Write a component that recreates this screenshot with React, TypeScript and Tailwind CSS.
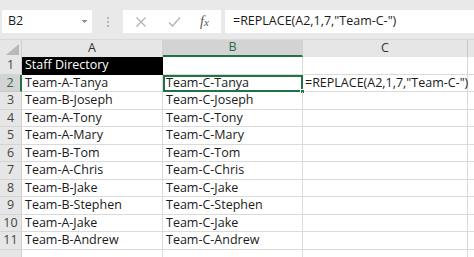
import React from 'react';

const ROWS: [string, string, string][] = [
  ['Staff Directory', '', ''],
  ['Team-A-Tanya', 'Team-C-Tanya', '=REPLACE(A2,1,7,"Team-C-")'],
  ['Team-B-Joseph', 'Team-C-Joseph', ''],
  ['Team-A-Tony', 'Team-C-Tony', ''],
  ['Team-A-Mary', 'Team-C-Mary', ''],
  ['Team-B-Tom', 'Team-C-Tom', ''],
  ['Team-A-Chris', 'Team-C-Chris', ''],
  ['Team-B-Jake', 'Team-C-Jake', ''],
  ['Team-B-Stephen', 'Team-C-Stephen', ''],
  ['Team-A-Jake', 'Team-C-Jake', ''],
  ['Team-B-Andrew', 'Team-C-Andrew', ''],
  ['', '', ''],
];

const font = { fontFamily: '"Open Sans", "Liberation Sans", sans-serif' };

const App: React.FC = () => {
  return (
    <div className="w-[474px] h-[257px] overflow-hidden bg-white text-[#1a1a1a]" style={font}>
      {/* Formula bar */}
      <div className="h-[40px] bg-[#e9e9e9] flex items-start pt-[10px] border-b border-[#d9d9d9]">
        <div className="ml-[2px] w-[90px] h-[23px] bg-white flex items-center justify-between pl-[6px] pr-[4px]">
          <span className="text-[12.5px]">B2</span>
          <svg width="7" height="5" viewBox="0 0 7 5">
            <path d="M0.5 1 L3.5 4 L6.5 1 Z" fill="#8a8a8a" />
          </svg>
        </div>
        <div className="w-[31px] h-[23px] flex flex-col items-center justify-center gap-[2px]">
          <span className="w-[2px] h-[2px] bg-[#b5b5b5]" />
          <span className="w-[2px] h-[2px] bg-[#b5b5b5]" />
          <span className="w-[2px] h-[2px] bg-[#b5b5b5]" />
        </div>
        <div className="w-[98px] h-[23px] bg-white flex items-center pl-[10px]">
          <svg width="12" height="12" viewBox="0 0 12 12" className="ml-[2px]">
            <path d="M1.5 1.5 L10.5 10.5 M10.5 1.5 L1.5 10.5" stroke="#b0b0b0" strokeWidth="1.2" fill="none" />
          </svg>
          <svg width="13" height="12" viewBox="0 0 13 12" className="ml-[21px]">
            <path d="M1 6.5 L4.5 10 L12 1.5" stroke="#b0b0b0" strokeWidth="1.3" fill="none" />
          </svg>
          <span
            className="ml-[19px] text-[14px] italic text-[#555]"
            style={{ fontFamily: '"Liberation Serif", serif' }}
          >
            f<span className="text-[11px]">x</span>
          </span>
        </div>
        <div className="ml-[4px] flex-1 h-[23px] bg-white flex items-center pl-[8px] text-[12.5px] whitespace-nowrap">
          =REPLACE(A2,1,7,&quot;Team-C-&quot;)
        </div>
      </div>

      {/* Column headers */}
      <div className="flex h-[17px] bg-[#e6e6e6] text-[12.5px] text-[#333]">
        <div className="w-[22px] shrink-0 border-r border-[#d0d0d0] flex items-end justify-end pr-[2px] pb-[2px]">
          <svg width="13" height="11" viewBox="0 0 13 11">
            <path d="M13 0 L13 11 L0 11 Z" fill="#b8b8b8" />
          </svg>
        </div>
        <div className="w-[141px] shrink-0 border-r border-[#d0d0d0] flex items-center justify-center">A</div>
        <div className="w-[140px] shrink-0 border-r border-[#d0d0d0] bg-[#d3d3d3] border-b-2 border-b-[#217346] text-[#2d6b47] flex items-center justify-center">B</div>
        <div className="w-[165px] shrink-0 border-r border-[#c8c8c8] flex items-center justify-center">C</div>
        <div className="flex-1" />
      </div>

      {/* Rows */}
      {ROWS.map((r, i) => {
        const n = i + 1;
        const sel = n === 2;
        return (
          <div key={i} className="flex h-[17.5px] text-[12.5px] leading-none">
            <div
              className={`w-[22px] shrink-0 border-r border-b flex items-center justify-center ${
                sel
                  ? 'bg-[#d3d3d3] text-[#2d6b47] border-r-[#217346] border-r-2 border-b-[#c8c8c8]'
                  : 'bg-[#e6e6e6] text-[#444] border-r-[#d0d0d0] border-b-[#d4d4d4]'
              }`}
            >
              {n <= 11 ? n : ''}
            </div>
            <div
              className={`w-[141px] shrink-0 border-r border-b flex items-center pl-[3px] whitespace-nowrap ${
                n === 1 ? 'bg-black text-white border-black' : 'border-[#dadada]'
              }`}
            >
              {r[0]}
            </div>
            <div
              className={`relative w-[140px] shrink-0 flex items-center whitespace-nowrap ${
                sel ? 'border-2 border-[#217346] pl-[1px]' : 'border-r border-b border-[#dadada] pl-[3px]'
              }`}
            >
              {r[1]}
              {sel && (
                <span className="absolute right-[-4px] bottom-[-4px] w-[5px] h-[5px] bg-[#217346] border border-white" />
              )}
            </div>
            <div className="w-[165px] shrink-0 border-r border-b border-[#dadada] flex items-center pl-[2px] whitespace-nowrap">
              {r[2]}
            </div>
            <div className="flex-1 border-b border-[#dadada]" />
          </div>
        );
      })}
    </div>
  );
};

export default App;
